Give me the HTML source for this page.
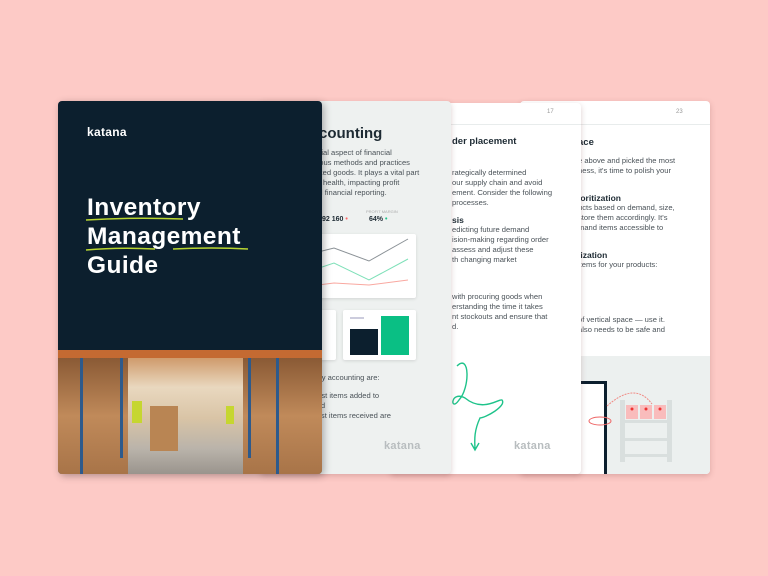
<!DOCTYPE html>
<html><head><meta charset="utf-8"><style>
*{margin:0;padding:0;box-sizing:border-box}
body{width:768px;height:576px;background:#fdcac6;position:relative;overflow:hidden;font-family:"Liberation Sans",sans-serif}
.pg{position:absolute;border-radius:4px;overflow:hidden;box-shadow:0 2px 6px rgba(120,60,60,.25)}
.t{position:absolute;font-size:7.6px;color:#4a5258;white-space:nowrap;line-height:10px}
.b{font-weight:bold;color:#1d2a33;font-size:8.5px}
.k{position:absolute;font-size:11px;color:#b8bdbf;letter-spacing:.3px;font-weight:bold}
</style></head><body>

<!-- page 4 -->
<div class="pg" style="left:520px;top:101px;width:190px;height:373px;background:#fff">
  <div style="position:absolute;left:0;right:0;top:23px;height:1px;background:#e8ecec"></div>
  <div class="t" style="left:156px;top:6px;font-size:6px;color:#999">23</div>
  <div class="t b" style="left:58px;top:37px;font-size:9.5px">ace</div>
  <div class="t" style="left:58px;top:55px">e above and picked the most</div>
  <div class="t" style="left:58px;top:65px">ness, it's time to polish your</div>
  <div class="t b" style="left:58px;top:92px">ioritization</div>
  <div class="t" style="left:58px;top:102px">ucts based on demand, size,</div>
  <div class="t" style="left:58px;top:112px">store them accordingly. It's</div>
  <div class="t" style="left:58px;top:122px">mand items accessible to</div>
  <div class="t b" style="left:58px;top:149px">lization</div>
  <div class="t" style="left:58px;top:159px">items for your products:</div>
  <div class="t" style="left:58px;top:214px">of vertical space — use it.</div>
  <div class="t" style="left:58px;top:224px">also needs to be safe and</div>
  <div style="position:absolute;left:0;right:0;top:255px;bottom:0;background:#ecf0ef"></div>
  <div style="position:absolute;left:50px;top:280px;width:37px;height:100px;border:3px solid #0c1f2e;background:#fff"></div>
  <svg style="position:absolute;left:60px;top:285px" width="130" height="85">
    <path d="M27 20 Q55 -5 72 18" stroke="#f08a84" fill="none" stroke-width="1" stroke-dasharray="2 1"/>
    <ellipse cx="20" cy="35" rx="11" ry="4" stroke="#e66" fill="none"/>
    <rect x="40" y="14" width="5" height="62" fill="#d9dfde"/><rect x="87" y="14" width="5" height="62" fill="#d9dfde"/>
    <rect x="40" y="34" width="52" height="3" fill="#d9dfde"/><rect x="40" y="52" width="52" height="3" fill="#d9dfde"/><rect x="40" y="68" width="52" height="3" fill="#d9dfde"/>
    <rect x="46" y="19" width="12" height="14" fill="#f9bcbc"/><rect x="60" y="19" width="12" height="14" fill="#f9bcbc"/><rect x="74" y="19" width="12" height="14" fill="#f9bcbc"/>
    <circle cx="52" cy="23" r="1.5" fill="#e33"/><circle cx="66" cy="23" r="1.5" fill="#e33"/><circle cx="80" cy="23" r="1.5" fill="#e33"/>
  </svg>
</div>

<!-- page 3 -->
<div class="pg" style="left:390px;top:103px;width:191px;height:371px;background:#fff">
  <div style="position:absolute;left:0;right:0;top:21px;height:1px;background:#e8ecec"></div>
  <div class="t" style="left:157px;top:4px;font-size:6px;color:#999">17</div>
  <div class="t b" style="left:62px;top:34px;font-size:9.5px">der placement</div>
  <div class="t" style="left:62px;top:65px">rategically determined</div>
  <div class="t" style="left:62px;top:75px">our supply chain and avoid</div>
  <div class="t" style="left:62px;top:85px">ement. Consider the following</div>
  <div class="t" style="left:62px;top:95px">processes.</div>
  <div class="t b" style="left:62px;top:112px">sis</div>
  <div class="t" style="left:62px;top:122px">edicting future demand</div>
  <div class="t" style="left:62px;top:132px">ision-making regarding order</div>
  <div class="t" style="left:62px;top:142px">assess and adjust these</div>
  <div class="t" style="left:62px;top:152px">th changing market</div>
  <div class="t" style="left:62px;top:189px">with procuring goods when</div>
  <div class="t" style="left:62px;top:199px">erstanding the time it takes</div>
  <div class="t" style="left:62px;top:209px">nt stockouts and ensure that</div>
  <div class="t" style="left:62px;top:219px">d.</div>
  <svg style="position:absolute;left:55px;top:255px" width="70" height="95">
    <path d="M12 8 C25 -5 25 30 14 42 C5 55 5 32 20 40 C38 55 55 40 57 42 C62 48 40 60 35 60 C28 75 30 85 30 92 M26 85 L30 92 L34 85" stroke="#1ec38a" stroke-width="1.4" fill="none"/>
  </svg>
  <div class="k" style="left:124px;top:337px">katana</div>
</div>

<!-- page 2 -->
<div class="pg" style="left:260px;top:101px;width:191px;height:373px;background:#eef1f0">
  <div class="t b" style="left:59px;top:24px;font-size:15px;line-height:18px">counting</div>
  <div class="t" style="left:55px;top:47px">ntial aspect of financial</div>
  <div class="t" style="left:55px;top:57px">rious methods and practices</div>
  <div class="t" style="left:55px;top:67px">cked goods. It plays a vital part</div>
  <div class="t" style="left:55px;top:77px">al health, impacting profit</div>
  <div class="t" style="left:55px;top:87px">all financial reporting.</div>
  <div class="t" style="left:106px;top:106px;font-size:4px;color:#aaa">PROFIT MARGIN</div>
  <div class="t b" style="left:62px;top:114px;font-size:7px">92 160 <span style="color:#f66">•</span></div>
  <div class="t b" style="left:109px;top:114px;font-size:7px">64% <span style="color:#1ec38a">•</span></div>
  <div style="position:absolute;left:50px;top:133px;width:106px;height:64px;background:#fff;border-radius:2px;box-shadow:0 1px 3px rgba(0,0,0,.12)"></div>
  <svg style="position:absolute;left:50px;top:133px" width="106" height="64">
    <polyline points="0,20 24,14 59,27 98,5" stroke="#8a9196" fill="none"/>
    <polyline points="0,37 24,29 59,46 98,25" stroke="#7ee0b8" fill="none"/>
    <polyline points="0,52 24,49 59,51 98,46" stroke="#f9a8a0" fill="none"/>
  </svg>
  <div style="position:absolute;left:40px;top:209px;width:36px;height:50px;background:#fff;border-radius:2px;box-shadow:0 1px 3px rgba(0,0,0,.12)"></div>
  <div style="position:absolute;left:83px;top:209px;width:73px;height:50px;background:#fff;border-radius:2px;box-shadow:0 1px 3px rgba(0,0,0,.12)"></div>
  <div style="position:absolute;left:90px;top:216px;width:14px;height:2px;background:#ccd"></div>
  <div style="position:absolute;left:90px;top:228px;width:28px;height:26px;background:#0c1f2e"></div>
  <div style="position:absolute;left:121px;top:215px;width:28px;height:39px;background:#0abf84"></div>
  <div class="t" style="left:55px;top:272px">ory accounting are:</div>
  <div class="t" style="left:55px;top:290px">first items added to</div>
  <div class="t" style="left:55px;top:300px">old</div>
  <div class="t" style="left:55px;top:310px">last items received are</div>
  <div class="k" style="left:124px;top:339px">katana</div>
</div>

<!-- cover -->
<div class="pg" style="left:58px;top:101px;width:264px;height:373px;background:#0c1f2e;box-shadow:2px 2px 8px rgba(0,0,0,.3)">
  <div style="position:absolute;left:29px;top:24px;color:#fff;font-weight:bold;font-size:12px;letter-spacing:.3px">katana</div>
  <div style="position:absolute;left:29px;top:92px;color:#fff;font-weight:bold;font-size:24.5px;line-height:29px;letter-spacing:.4px">Inventory<br>Management<br>Guide</div>
  <svg style="position:absolute;left:25px;top:116px" width="170" height="40">
    <path d="M3 3 Q50 0 100 2" stroke="#b9d531" stroke-width="1.5" fill="none"/>
    <path d="M3 33 Q35 30 72 32 M90 32 Q130 30 165 32" stroke="#b9d531" stroke-width="1.5" fill="none"/>
  </svg>
  <div style="position:absolute;left:0;top:249px;width:264px;height:124px;background:linear-gradient(180deg,#c88a55 0%,#e9d8bf 30%,#d9c4a6 55%,#b9b3aa 80%,#9a948d 100%)"></div>
  <div style="position:absolute;left:0;top:249px;width:264px;height:8px;background:#c46a32"></div>
  <div style="position:absolute;left:0;top:257px;width:70px;height:116px;background:linear-gradient(180deg,#8a5a35,#c08a5a 50%,#a87448)"></div>
  <div style="position:absolute;left:185px;top:257px;width:79px;height:116px;background:linear-gradient(180deg,#8a5a35,#c08a5a 50%,#a87448)"></div>
  <div style="position:absolute;left:22px;top:257px;width:3px;height:116px;background:#2d5a8c"></div>
  <div style="position:absolute;left:62px;top:257px;width:3px;height:100px;background:#2d5a8c"></div>
  <div style="position:absolute;left:218px;top:257px;width:3px;height:116px;background:#2d5a8c"></div>
  <div style="position:absolute;left:190px;top:257px;width:3px;height:100px;background:#2d5a8c"></div>
  <div style="position:absolute;left:92px;top:305px;width:28px;height:45px;background:#b98553"></div>
  <div style="position:absolute;left:74px;top:300px;width:10px;height:22px;background:#c6d630"></div>
  <div style="position:absolute;left:168px;top:305px;width:8px;height:18px;background:#c6d630"></div>
</div>
</body></html>
